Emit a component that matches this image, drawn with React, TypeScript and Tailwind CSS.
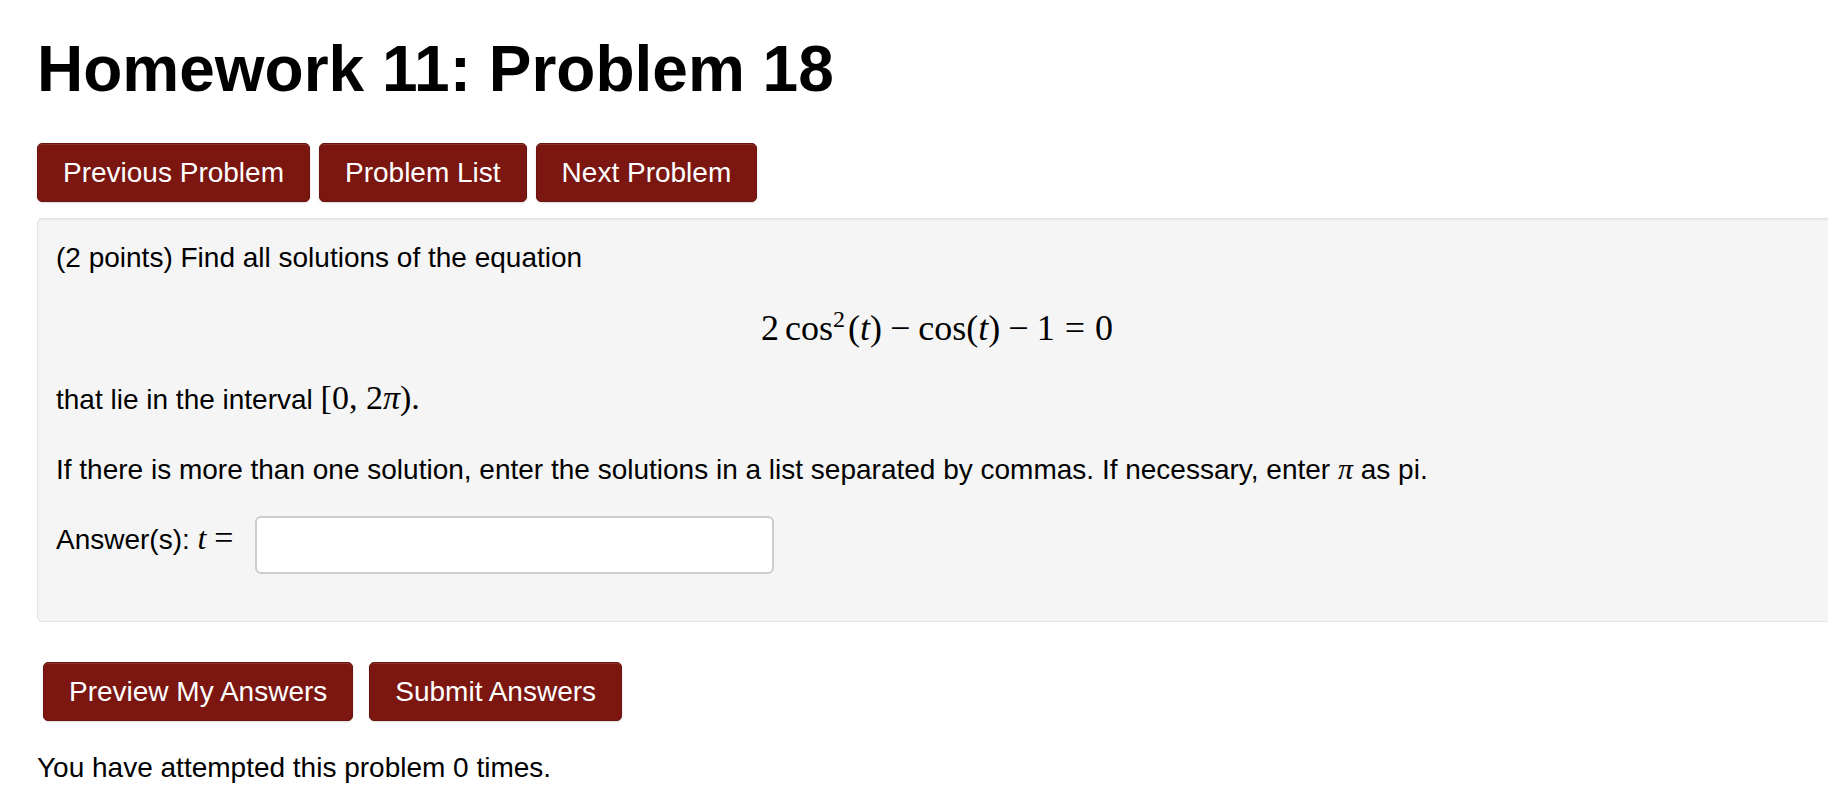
import React from 'react';

const btn =
  'h-[59px] px-[25px] rounded-[5px] bg-[#7b1610] border border-[#6b130e] text-white text-[28px] leading-[40px] flex items-center shadow-[inset_0_1px_0_rgba(255,255,255,0.12),0_1px_2px_rgba(0,0,0,0.15)]';

const serif = "font-['Liberation_Serif',serif]";

export default function App() {
  return (
    <div className="w-full h-[794px] overflow-hidden bg-white text-black font-['Liberation_Sans',Arial,sans-serif] pl-[37px]">
      <h1 className="mt-[37px] text-[64px] leading-[64px] font-bold">Homework 11: Problem 18</h1>

      {/* Navigation */}
      <div className="mt-[42px] flex gap-[9px]">
        <button className={btn}>Previous Problem</button>
        <button className={btn}>Problem List</button>
        <button className={btn}>Next Problem</button>
      </div>

      {/* Problem body */}
      <div className="mt-[16px] w-[1800px] rounded-[5px] border border-[#e3e3e3] bg-[#f5f5f5] shadow-[inset_0_1px_2px_rgba(0,0,0,0.06)] pl-[18px] pr-[18px] pt-[19px] pb-[47px] text-[28px] leading-[40px]">
        <p>(2 points) Find all solutions of the equation</p>

        <div className={`mt-[30px] flex justify-center items-baseline text-[36px] leading-[40px] ${serif}`}>
          <span>2</span>
          <span className="ml-[6px]">cos</span>
          <span className="text-[24px] leading-none relative -top-[13px]">2</span>
          <span className="ml-[3px]">(</span>
          <span className="italic">t</span>
          <span>)</span>
          <span className="mx-[8px]">−</span>
          <span>cos(</span>
          <span className="italic">t</span>
          <span>)</span>
          <span className="mx-[8px]">−</span>
          <span>1</span>
          <span className="mx-[10px]">=</span>
          <span>0</span>
        </div>

        <p className="mt-[30px]">
          that lie in the interval{' '}
          <span className={`text-[34px] ${serif}`}>
            [0, 2<span className="italic">π</span>).
          </span>
        </p>

        <p className="mt-[29px]">
          If there is more than one solution, enter the solutions in a list separated by commas. If necessary, enter{' '}
          <span className={`italic text-[30px] ${serif}`}>π</span> as pi.
        </p>

        <div className="mt-[26px] flex items-start">
          <span className="mt-[2px]">
            Answer(s): <span className={`italic text-[32px] ${serif}`}>t</span>{' '}
            <span className={`text-[34px] ${serif}`}>=</span>
          </span>
          <input
            type="text"
            className="ml-[22px] w-[519px] h-[58px] bg-white border-2 border-[#cccccc] rounded-[6px] outline-none px-3 text-[28px]"
          />
        </div>
      </div>

      {/* Submit */}
      <div className="mt-[40px] ml-[6px] flex gap-[16px]">
        <button className={btn}>Preview My Answers</button>
        <button className={btn}>Submit Answers</button>
      </div>

      <p className="mt-[27px] text-[28px] leading-[40px]">You have attempted this problem 0 times.</p>
    </div>
  );
}
